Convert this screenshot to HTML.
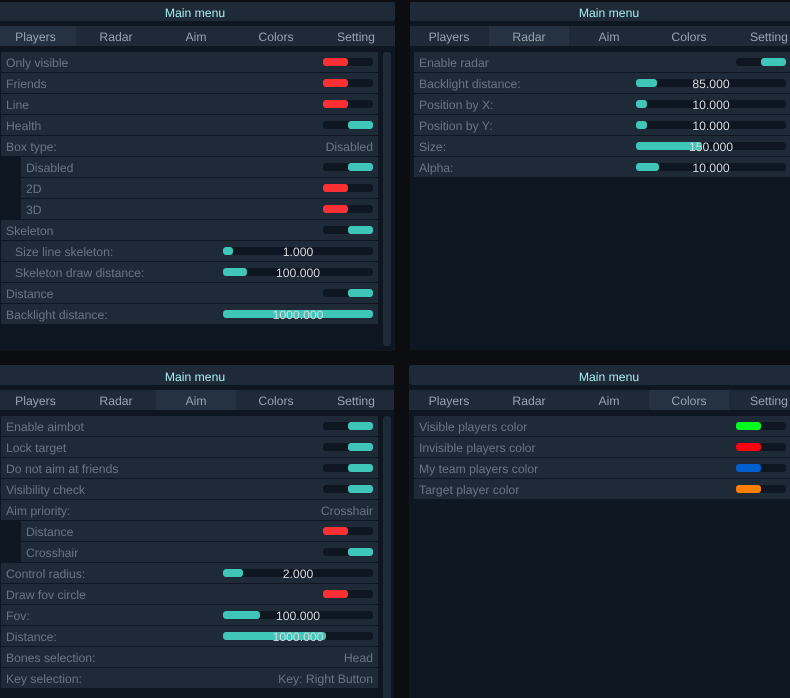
<!DOCTYPE html>
<html><head><meta charset="utf-8"><style>
html,body{margin:0;padding:0;background:#0b0d10;width:790px;height:698px;overflow:hidden}
body{position:relative;font:12.2px "Liberation Sans",sans-serif;color:#6a7582;text-rendering:geometricPrecision}
.p{position:absolute;width:400px;background:#0e1621;overflow:hidden}
.t{position:absolute;left:0;top:0;width:400px;height:19px;background:#1f2a38;color:#a6eef4;text-align:center;line-height:23px;border-radius:3px}
.tb{position:absolute;left:0;top:24px;width:400px;height:20px;background:#1f2a38;display:flex;color:#97a3b0;line-height:22px;text-align:center}
.tb div{width:80px;flex:none}
.tb .a{background:#243242}
.l{position:absolute;left:6px;top:50px;width:377px}
.r{position:relative;height:20px;margin-bottom:1px;background:#1f2a38;line-height:23px;padding-left:5px;white-space:nowrap}
.s{margin-left:20px;padding-left:5px}
.i{padding-left:14px}
.v{position:absolute;right:5px;top:0}
.k{position:absolute;right:5px;top:6px;width:150px;height:8px;background:#0e1621;border-radius:3px}
.g{right:5px;width:50px}
.k b{position:absolute;top:0;height:8px;border-radius:3px;background:#40c6b8}
.on b{left:25px;width:25px}
.off b{left:0;width:25px;background:#ff3034}
.k i{position:absolute;left:0;right:0;top:-6px;font-style:normal;text-align:center;color:#d6dbdf;line-height:22px}
.sb{position:absolute;left:388px;top:50px;width:8px;border-radius:3px;background:#1f2a38}
.big .t{height:20px;line-height:25px}
.big .tb{top:25px}
.big .l{top:51px}
.first .tb div:first-child{width:81px}
</style></head><body>

<div class="p first" style="left:-5px;top:2px;height:349px">
<div class="t">Main menu</div>
<div class="tb"><div class="a">Players</div><div>Radar</div><div>Aim</div><div>Colors</div><div>Setting</div></div>
<div class="l">
<div class="r">Only visible<div class="k g off"><b></b></div></div>
<div class="r">Friends<div class="k g off"><b></b></div></div>
<div class="r">Line<div class="k g off"><b></b></div></div>
<div class="r">Health<div class="k g on"><b></b></div></div>
<div class="r">Box type:<span class="v">Disabled</span></div>
<div class="r s">Disabled<div class="k g on"><b></b></div></div>
<div class="r s">2D<div class="k g off"><b></b></div></div>
<div class="r s">3D<div class="k g off"><b></b></div></div>
<div class="r">Skeleton<div class="k g on"><b></b></div></div>
<div class="r i">Size line skeleton:<div class="k"><b style="width:10px"></b><i>1.000</i></div></div>
<div class="r i">Skeleton draw distance:<div class="k"><b style="width:24px"></b><i>100.000</i></div></div>
<div class="r">Distance<div class="k g on"><b></b></div></div>
<div class="r">Backlight distance:<div class="k"><b style="width:150px"></b><i>1000.000</i></div></div>
</div>
<div class="sb" style="height:294px"></div>
</div>

<div class="p" style="left:410px;top:2px;height:348px;width:380px">
<div class="t" style="left:-1px">Main menu</div>
<div class="tb" style="left:-1px"><div>Players</div><div class="a">Radar</div><div>Aim</div><div>Colors</div><div>Setting</div></div>
<div class="l" style="left:4px">
<div class="r">Enable radar<div class="k g on"><b></b></div></div>
<div class="r">Backlight distance:<div class="k"><b style="width:21px"></b><i>85.000</i></div></div>
<div class="r">Position by X:<div class="k"><b style="width:11px"></b><i>10.000</i></div></div>
<div class="r">Position by Y:<div class="k"><b style="width:11px"></b><i>10.000</i></div></div>
<div class="r">Size:<div class="k"><b style="width:66px"></b><i>150.000</i></div></div>
<div class="r">Alpha:<div class="k"><b style="width:23px"></b><i>10.000</i></div></div>
</div>
</div>

<div class="p first big" style="left:-6px;top:365px;height:333px">
<div class="t" style="left:1px">Main menu</div>
<div class="tb" style="left:1px"><div>Players</div><div>Radar</div><div class="a">Aim</div><div>Colors</div><div>Setting</div></div>
<div class="l" style="left:7px">
<div class="r">Enable aimbot<div class="k g on"><b></b></div></div>
<div class="r">Lock target<div class="k g on"><b></b></div></div>
<div class="r">Do not aim at friends<div class="k g on"><b></b></div></div>
<div class="r">Visibility check<div class="k g on"><b></b></div></div>
<div class="r">Aim priority:<span class="v">Crosshair</span></div>
<div class="r s">Distance<div class="k g off"><b></b></div></div>
<div class="r s">Crosshair<div class="k g on"><b></b></div></div>
<div class="r">Control radius:<div class="k"><b style="width:20px"></b><i>2.000</i></div></div>
<div class="r">Draw fov circle<div class="k g off"><b></b></div></div>
<div class="r">Fov:<div class="k"><b style="width:37px"></b><i>100.000</i></div></div>
<div class="r">Distance:<div class="k"><b style="width:103px"></b><i>1000.000</i></div></div>
<div class="r">Bones selection:<span class="v">Head</span></div>
<div class="r">Key selection:<span class="v">Key: Right Button</span></div>
</div>
<div class="sb" style="left:389px;top:51px;height:290px"></div>
</div>

<div class="p big" style="left:409px;top:365px;height:333px;width:381px">
<div class="t">Main menu</div>
<div class="tb"><div>Players</div><div>Radar</div><div>Aim</div><div class="a">Colors</div><div>Setting</div></div>
<div class="l" style="left:5px">
<div class="r">Visible players color<div class="k g off"><b style="background:#00ff1e"></b></div></div>
<div class="r">Invisible players color<div class="k g off"><b style="background:#ff0010"></b></div></div>
<div class="r">My team players color<div class="k g off"><b style="background:#0060d0"></b></div></div>
<div class="r">Target player color<div class="k g off"><b style="background:#ff8000"></b></div></div>
</div>
</div>

</body></html>
